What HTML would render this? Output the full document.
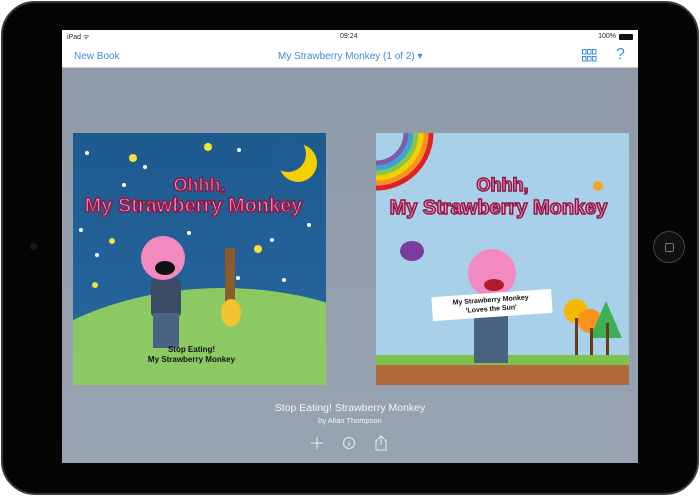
<!DOCTYPE html>
<html><head><style>
*{margin:0;padding:0;box-sizing:border-box}
html,body{width:700px;height:497px;overflow:hidden}
body{background:#fff;position:relative;font-family:"Liberation Sans",sans-serif}
.ipad{position:absolute;left:1px;top:1px;width:698px;height:494px;background:#050505;border-radius:34px;border:2px solid #3a3a3a}
.screen{position:absolute;left:62px;top:30px;width:576px;height:433px;background:linear-gradient(#8e9aa8,#97a3b1);overflow:hidden}
.status{position:absolute;left:0;top:0;width:100%;height:14px;background:#fff;font-size:7px;color:#222}
.nav{position:absolute;left:0;top:14px;width:100%;height:24px;background:#fff;border-bottom:1px solid #ccc}
.blue{color:#3b8ee0}
.book{position:absolute;top:103px;width:253px;height:252px;overflow:hidden}
.t{position:absolute;font-family:"Liberation Sans",sans-serif;font-weight:bold;color:#f59ac6;-webkit-text-stroke:1.5px #8e1846;text-align:center;width:100%;white-space:nowrap}
</style></head><body>
<div class="ipad"></div>
<div style="position:absolute;left:30px;top:243px;width:7px;height:7px;border-radius:50%;background:#1a1a1a"></div>
<div style="position:absolute;left:653px;top:231px;width:32px;height:32px;border-radius:50%;background:#111;border:1px solid #444"><div style="position:absolute;left:11px;top:11px;width:9px;height:9px;border:1px solid #777;border-radius:2px"></div></div>
<div class="screen">
 <div class="status"><span style="position:absolute;left:5px;top:3px">iPad ᯤ</span><span style="position:absolute;left:278px;top:3px">09:24</span><span style="position:absolute;right:22px;top:3px">100%</span><span style="position:absolute;right:5px;top:4px;width:14px;height:6px;background:#111;border-radius:1px"></span></div>
 <div class="nav">
  <span class="blue" style="position:absolute;left:12px;top:7px;font-size:10px">New Book</span>
  <span class="blue" style="position:absolute;left:216px;top:7px;font-size:10px">My Strawberry Monkey (1 of 2) ▾</span>
  <svg style="position:absolute;left:520px;top:5px" width="15" height="13"><g fill="none" stroke="#3b8ee0" stroke-width="1"><rect x="0.5" y="0.5" width="3.5" height="4.5"/><rect x="5.5" y="0.5" width="3.5" height="4.5"/><rect x="10.5" y="0.5" width="3.5" height="4.5"/><rect x="0.5" y="7.5" width="3.5" height="4.5"/><rect x="5.5" y="7.5" width="3.5" height="4.5"/><rect x="10.5" y="7.5" width="3.5" height="4.5"/></g></svg>
  <span class="blue" style="position:absolute;left:554px;top:2px;font-size:16px;font-weight:300">?</span>
 </div>
 <div class="book" style="left:11px;background:linear-gradient(#1d5a8e,#2768a0)">
  <svg width="253" height="252" style="position:absolute;left:0;top:0">
   <ellipse cx="150" cy="330" rx="260" ry="175" fill="#8cc963"/>
   <circle cx="225" cy="30" r="19" fill="#f5d000"/><circle cx="215" cy="21" r="18" fill="#1e5c91"/>
   <g fill="#f5e13a"><circle cx="60" cy="25" r="4"/><circle cx="135" cy="14" r="4"/><circle cx="185" cy="116" r="4"/><circle cx="39" cy="108" r="3"/><circle cx="22" cy="152" r="3"/></g>
   <g fill="#fff"><circle cx="14" cy="20" r="2"/><circle cx="72" cy="34" r="2"/><circle cx="51" cy="52" r="2"/><circle cx="166" cy="17" r="2"/><circle cx="8" cy="97" r="2"/><circle cx="116" cy="100" r="2"/><circle cx="236" cy="92" r="2"/><circle cx="199" cy="107" r="2"/><circle cx="24" cy="122" r="2"/><circle cx="211" cy="147" r="2"/><circle cx="165" cy="145" r="2"/></g>
   <rect x="78" y="145" width="30" height="40" rx="6" fill="#3d4a66"/>
   <rect x="80" y="180" width="26" height="35" fill="#4a6383"/>
   <circle cx="90" cy="125" r="22" fill="#f28ac0"/><ellipse cx="92" cy="135" rx="10" ry="7" fill="#111"/>
   <rect x="152" y="115" width="10" height="75" fill="#8a5a2a"/><ellipse cx="158" cy="180" rx="10" ry="14" fill="#f1c232"/>
  </svg>
  <div class="t" style="top:42px;font-size:18px">Ohhh,</div>
  <div class="t" style="top:62px;font-size:20px;left:-6px">My Strawberry Monkey</div>
  <div style="position:absolute;top:212px;width:100%;text-align:center;font-size:8px;font-weight:bold;color:#111;line-height:10px;left:-8px">Stop Eating!<br>My Strawberry Monkey</div>
 </div>
 <div class="book" style="left:314px;background:#a9d0e9">
  <svg width="253" height="252" style="position:absolute;left:0;top:0">
   <g fill="none" stroke-width="5"><circle cx="0" cy="0" r="55" stroke="#e31e24"/><circle cx="0" cy="0" r="50" stroke="#f7941d"/><circle cx="0" cy="0" r="45" stroke="#f5d000"/><circle cx="0" cy="0" r="40" stroke="#8cc63f"/><circle cx="0" cy="0" r="35" stroke="#3aa4dc"/><circle cx="0" cy="0" r="30" stroke="#7b5ea7"/></g>
   <rect x="0" y="222" width="253" height="10" fill="#7cc24b"/><rect x="0" y="232" width="253" height="20" fill="#b06a3c"/>
   <ellipse cx="36" cy="118" rx="12" ry="10" fill="#7b3d9b"/>
   <rect x="98" y="175" width="34" height="55" fill="#4a6383"/>
   <circle cx="116" cy="140" r="24" fill="#f28ac0"/><ellipse cx="118" cy="152" rx="10" ry="6" fill="#b01a2a"/>
   <rect x="56" y="160" width="120" height="24" fill="#fff" transform="rotate(-4 116 172)"/>
   <circle cx="200" cy="178" r="12" fill="#f5b800"/><circle cx="214" cy="188" r="12" fill="#f7941d"/><path d="M230 168 L246 205 L214 205Z" fill="#3cb054"/>
   <rect x="199" y="185" width="3" height="37" fill="#6b3a1a"/><rect x="214" y="195" width="3" height="27" fill="#6b3a1a"/><rect x="230" y="190" width="3" height="32" fill="#6b3a1a"/>
   <circle cx="222" cy="53" r="5" fill="#f5a623"/>
  </svg>
  <div class="t" style="top:42px;font-size:18px">Ohhh,</div>
  <div class="t" style="top:64px;font-size:20px;left:-4px">My Strawberry Monkey</div>
  <div style="position:absolute;top:163px;left:60px;width:110px;text-align:center;font-size:7px;font-weight:bold;color:#111;line-height:9px;transform:rotate(-4deg)">My Strawberry Monkey<br>'Loves the Sun'</div>
 </div>
 <div style="position:absolute;top:372px;width:100%;text-align:center;font-size:10.5px;color:#f4f6f8">Stop Eating! Strawberry Monkey</div>
 <div style="position:absolute;top:386px;width:100%;text-align:center;font-size:7.5px;color:#f0f3f6">by Allan Thompson</div>
 <svg style="position:absolute;left:248px;top:405px" width="80" height="16"><g fill="none" stroke="#e8ecf0" stroke-width="1"><path d="M7 2v12M1 8h12"/><circle cx="39" cy="8" r="5.5"/><path d="M39 7v4M39 5v0.8"/><path d="M68 5h-2v10h10v-10h-2M71 1v9M68 4l3-3 3 3"/></g></svg>
</div>
</body></html>
